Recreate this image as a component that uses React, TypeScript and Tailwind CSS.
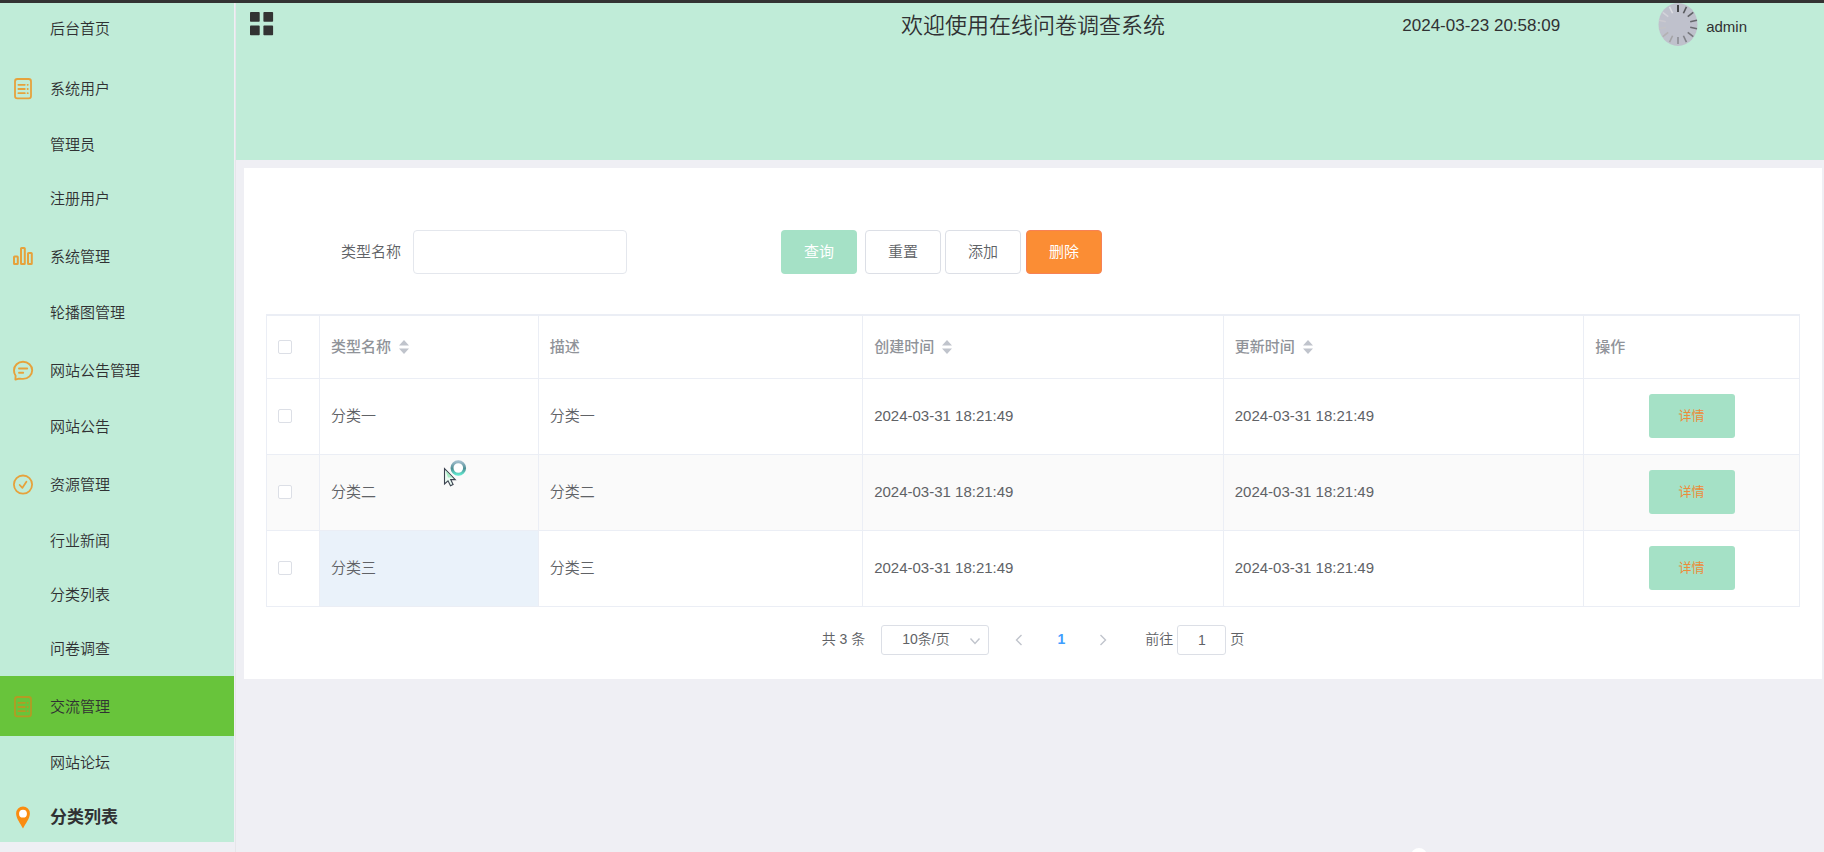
import React from 'react';

type IconName = 'list' | 'bars' | 'chat' | 'check' | 'pin';

interface MenuEntry {
  label: string;
  icon?: IconName;
  active?: boolean;
}

const menu: MenuEntry[] = [
  { label: '系统用户', icon: 'list' },
  { label: '管理员' },
  { label: '注册用户' },
  { label: '系统管理', icon: 'bars' },
  { label: '轮播图管理' },
  { label: '网站公告管理', icon: 'chat' },
  { label: '网站公告' },
  { label: '资源管理', icon: 'check' },
  { label: '行业新闻' },
  { label: '分类列表' },
  { label: '问卷调查' },
  { label: '交流管理', icon: 'list', active: true },
  { label: '网站论坛' },
];

const rows = ['分类一', '分类二', '分类三'].map((name) => ({
  name,
  description: name,
  created: '2024-03-31 18:21:49',
  updated: '2024-03-31 18:21:49',
}));

function MenuIcon({ name }: { name: IconName }) {
  const common = {
    viewBox: '0 0 22 24',
    fill: 'none',
    stroke: 'currentColor',
    strokeLinecap: 'round' as const,
    strokeLinejoin: 'round' as const,
    'aria-hidden': true,
    className: 'h-6 w-[22px] shrink-0',
  };
  switch (name) {
    case 'list':
      return (
        <svg {...common} strokeWidth="1.8">
          <rect x="3" y="2" width="16" height="19.4" rx="2.4" />
          <path d="M6.4 7.8h6.4M6.4 12h6.4M6.4 16.2h6.4M15.6 7.8h.2M15.6 12h.2M15.6 16.2h.2" />
        </svg>
      );
    case 'bars':
      return (
        <svg {...common} strokeWidth="2">
          <rect x="2" y="11.6" width="3.8" height="7.400" rx="0.600" />
          <rect x="9" y="2.900" width="3.8" height="16.100" rx="0.600" />
          <rect x="16" y="7.900" width="3.8" height="11.100" rx="0.600" />
        </svg>
      );
    case 'chat':
      return (
        <svg {...common} strokeWidth="1.9">
          <path d="M3.600 16.800A9 8.700 0 0 1 2 11.300C2 6.500 6 2.800 11 2.800s9.200 3.800 9.200 8.500-4.100 8.600-9.200 8.600c-1.500 0-2.900-.2-4.100-.3L3.400 20.600z" />
          <path d="M7 9.500h8.200M7 13.700h4.200" />
        </svg>
      );
    case 'check':
      return (
        <svg {...common} strokeWidth="1.8">
          <circle cx="11" cy="11.600" r="9.100" />
          <path d="M7.700 12l2.700 2.800 4-6" />
        </svg>
      );
    case 'pin':
      return (
        <svg {...common} stroke="none">
          <path
            d="M11 .6a6.900 6.900 0 0 0-6.900 6.900C4.100 12.400 8.500 17.900 11 22.400c2.500-4.500 6.900-10 6.900-14.900A6.900 6.900 0 0 0 11 .6z"
            fill="currentColor"
          />
          <circle cx="11" cy="7.700" r="3.900" fill="#fff" />
        </svg>
      );
  }
}

function Sidebar() {
  return (
    <nav className="w-[234px] shrink-0 self-start bg-[#c0ecd8] text-[15px] text-[#303133]">
      <a href="#home" className="flex h-[55px] items-center pb-[2px] pl-[50px]">
        后台首页
      </a>
      {menu.map((entry) =>
        entry.icon ? (
          <a
            key={entry.label}
            href={'#' + entry.label}
            className={
              entry.active
                ? 'flex h-[60px] items-center gap-4 bg-[#68c43b] pt-[2px] pl-3'
                : 'flex h-[60px] items-center gap-4 pt-[2px] pl-3'
            }
          >
            <span className={entry.active ? 'text-[#b39b24]' : 'text-[#e6a23c]'}>
              <MenuIcon name={entry.icon} />
            </span>
            {entry.label}
          </a>
        ) : (
          <a key={entry.label} href={'#' + entry.label} className="flex h-[54px] items-center pl-[50px]">
            {entry.label}
          </a>
        ),
      )}
      <a href="#current" className="flex h-[52px] items-center gap-4 pt-[3px] pl-3 text-[17px] font-bold">
        <span className="text-[#fa8c10]">
          <MenuIcon name="pin" />
        </span>
        分类列表
      </a>
    </nav>
  );
}

function Avatar() {
  const shades = [
    '#222', '#55565a', '#606166', '#66676b', '#6b6c70', '#75767b', '#808187',
    '#8c8d93', '#a4a3a6', '#b3b1b3', '#c4c3c6', '#cbcad0', '#d3d3da', '#dcdce2',
  ];
  const step = 360 / shades.length;
  return (
    <svg viewBox="0 0 40 43" className="h-[43px] w-10" role="img" aria-label="头像">
      <ellipse cx="20" cy="21.500" rx="19.500" ry="21.500" fill="#bfc1cc" />
      {shades.map((shade, i) => (
        <line
          key={shade}
          x1="20"
          y1="2"
          x2="20"
          y2="9"
          stroke={shade}
          strokeWidth="1.600"
          transform={`rotate(${i * step} 20 21.500)`}
        />
      ))}
    </svg>
  );
}

function Header() {
  return (
    <header className="h-[157px] bg-[#c0ecd8] pl-[6px] text-[#303133]">
      <div className="grid h-[43px] grid-cols-[1fr_auto_1fr] items-center">
        <button type="button" aria-label="菜单" className="justify-self-start p-2 pt-[6px]">
          <svg viewBox="0 0 24 24" className="size-6" fill="#333" aria-hidden="true">
            <rect x="0" y="0" width="9.700" height="9.700" rx="0.800" />
            <rect x="13.400" y="0" width="9.700" height="9.700" rx="0.800" />
            <rect x="0" y="13.600" width="9.700" height="9.700" rx="0.800" />
            <rect x="13.400" y="13.600" width="9.700" height="9.700" rx="0.800" />
          </svg>
        </button>
        <h1 className="pt-[2px] text-[22px] leading-8 font-[350]">欢迎使用在线问卷调查系统</h1>
        <div className="flex items-center justify-end pr-[77px]">
          <time className="mr-[98px] pt-[2px] text-[17px]">2024-03-23 20:58:09</time>
          <Avatar />
          <span className="pt-[6px] pl-2 text-[15px]">admin</span>
        </div>
      </div>
    </header>
  );
}

function SearchForm() {
  const plain = 'h-11 w-[76px] rounded-[4px] border border-[#dcdfe6] bg-white text-[#606266]';
  return (
    <form className="flex items-center pl-[75px] text-[15px] text-[#606266]" onSubmit={(e) => e.preventDefault()}>
      <label htmlFor="type-name">类型名称</label>
      <input
        id="type-name"
        type="text"
        className="ml-3 h-11 w-[214px] rounded-[4px] border border-[#e4e7ed] px-4 outline-none"
      />
      <button type="submit" className="ml-[154px] h-11 w-[76px] rounded-[4px] bg-[#a5e1c6] font-normal text-white">
        查询
      </button>
      <button type="reset" className={plain + ' ml-2'}>
        重置
      </button>
      <button type="button" className={plain + ' ml-1'}>
        添加
      </button>
      <button
        type="button"
        className="ml-[5px] h-11 w-[76px] rounded-[4px] border border-[#f78155] bg-[#fb8d34] font-normal text-white"
      >
        删除
      </button>
    </form>
  );
}

function SortCaret() {
  return (
    <svg viewBox="0 0 10 14" className="ml-2 inline-block h-[14px] w-[10px]" fill="#c0c4cc" aria-hidden="true">
      <path d="M0 5.500L5 0l5 5.500zM0 8.500L5 14l5-5.500z" />
    </svg>
  );
}

function Tick({ label }: { label: string }) {
  return (
    <input
      type="checkbox"
      aria-label={label}
      className="block size-[14px] appearance-none rounded-[2px] border border-[#dcdfe6] bg-white"
    />
  );
}

function DataTable() {
  const head = 'h-[63px] border border-[#ebeef5] px-[11px] text-left font-medium';
  const cell = 'h-[76px] border border-[#ebeef5] px-[11px]';
  return (
    <table className="mt-10 w-full table-fixed border-collapse border-t-2 border-[#ebeef5] text-[15px] text-[#606266]">
      <colgroup>
        <col className="w-[3.45%]" />
        <col className="w-[14.27%]" />
        <col className="w-[21.17%]" />
        <col className="w-[23.52%]" />
        <col className="w-[23.52%]" />
        <col />
      </colgroup>
      <thead className="text-[#909399]">
        <tr>
          <th className={head}>
            <Tick label="全选" />
          </th>
          <th className={head}>
            <span className="flex items-center">
              类型名称
              <SortCaret />
            </span>
          </th>
          <th className={head}>描述</th>
          <th className={head}>
            <span className="flex items-center">
              创建时间
              <SortCaret />
            </span>
          </th>
          <th className={head}>
            <span className="flex items-center">
              更新时间
              <SortCaret />
            </span>
          </th>
          <th className={head}>操作</th>
        </tr>
      </thead>
      <tbody>
        {rows.map((row, i) => (
          <tr key={row.name} className={i === 1 ? 'bg-[#fafafa]' : 'bg-white'}>
            <td className={cell}>
              <Tick label={'选择' + row.name} />
            </td>
            <td className={i === 2 ? cell + ' bg-[#eaf2fa]' : cell}>{row.name}</td>
            <td className={cell}>{row.description}</td>
            <td className={cell}>{row.created}</td>
            <td className={cell}>{row.updated}</td>
            <td className={cell + ' text-center'}>
              <button
                type="button"
                className="h-11 w-[86px] rounded-[3px] bg-[#a5e1c6] text-[13px] font-normal text-[#ec8c3a]"
              >
                详情
              </button>
            </td>
          </tr>
        ))}
      </tbody>
    </table>
  );
}

function Chevron({ d }: { d: string }) {
  return (
    <svg
      viewBox="0 0 12 12"
      className="size-3"
      fill="none"
      stroke="#c0c4cc"
      strokeWidth="1.400"
      aria-hidden="true"
    >
      <path d={d} />
    </svg>
  );
}

function Pagination() {
  return (
    <div className="mt-[18px] flex h-[30px] items-center justify-center text-[14px] text-[#606266]">
      <span>共 3 条</span>
      <div className="relative ml-4">
        <select
          aria-label="每页条数"
          className="h-[30px] w-[108px] appearance-none rounded-[3px] border border-[#dcdfe6] bg-white pl-5"
        >
          <option>10条/页</option>
        </select>
        <span className="pointer-events-none absolute top-[10px] right-2">
          <Chevron d="M1.500 3.500L6 8.500l4.500-5" />
        </span>
      </div>
      <button type="button" aria-label="上一页" className="ml-6">
        <Chevron d="M8.500 1L3.500 6l5 5" />
      </button>
      <button type="button" className="w-[72px] font-bold text-[#409eff]">
        1
      </button>
      <button type="button" aria-label="下一页">
        <Chevron d="M3.500 1l5 5-5 5" />
      </button>
      <label htmlFor="page-jump" className="ml-9">
        前往
      </label>
      <input
        id="page-jump"
        type="text"
        defaultValue="1"
        className="mx-1 h-[30px] w-[49px] rounded-[3px] border border-[#dcdfe6] text-center"
      />
      <span>页</span>
    </div>
  );
}

function BusyCursor() {
  return (
    <svg viewBox="0 0 24 28" className="pointer-events-none absolute top-[456px] left-[443px] h-7 w-6" aria-hidden="true">
      <defs>
        <linearGradient id="ring" x1="0" y1="0" x2="0" y2="1">
          <stop offset="0" stopColor="#9fbccb" />
          <stop offset="0.550" stopColor="#4e8f95" />
          <stop offset="1" stopColor="#5fe3cb" />
        </linearGradient>
      </defs>
      <path
        d="M1.500 9.500v15.500l3.500-3.200 2.500 5 2.600-1.200-2.400-5h4.600z"
        fill="#eafaf2"
        stroke="#3c4350"
        strokeWidth="1.100"
      />
      <path d="M2.500 11.500l7 7H5z" fill="#a6ecc4" />
      <circle cx="15.300" cy="9" r="6.300" fill="#fff" stroke="url(#ring)" strokeWidth="3" />
    </svg>
  );
}

export default function App() {
  return (
    <div className="relative flex min-h-screen overflow-hidden border-t-[3px] border-[#333] bg-[#efeff4] font-['Liberation_Sans','Noto_Sans_CJK_SC',sans-serif] font-[350]">
      <Sidebar />
      <div className="ml-px min-w-0 flex-1 border-l border-[#e6e6ea]">
        <Header />
        <main className="mt-2 mr-[2px] ml-2 bg-white px-[22px] pt-[62px] pb-6">
          <SearchForm />
          <DataTable />
          <Pagination />
        </main>
      </div>
      <BusyCursor />
      <span className="absolute -bottom-3 left-[1411px] size-4 rounded-full bg-white" />
    </div>
  );
}
